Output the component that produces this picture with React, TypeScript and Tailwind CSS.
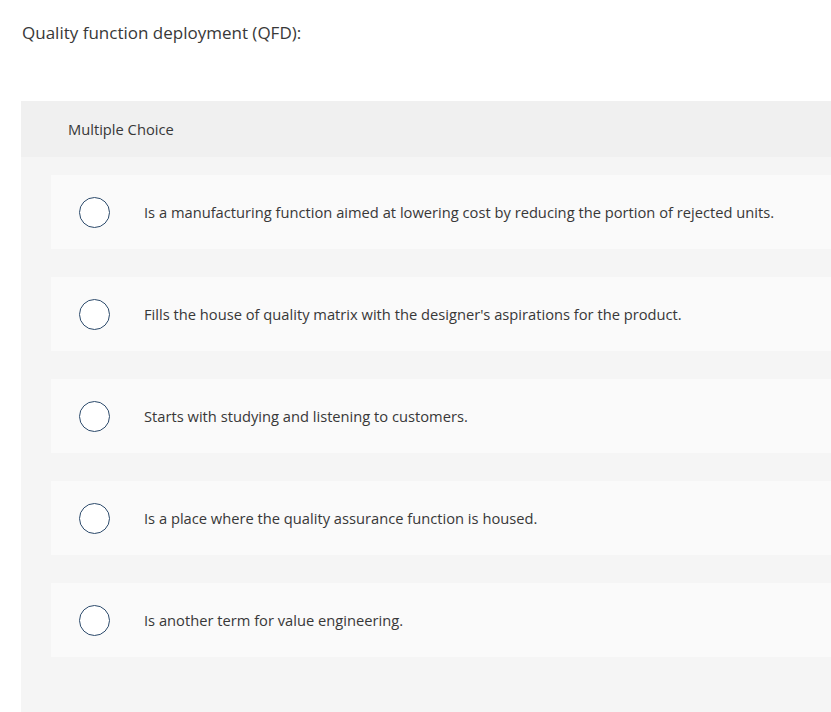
const options = [
  "Is a manufacturing function aimed at lowering cost by reducing the portion of rejected units.",
  "Fills the house of quality matrix with the designer's aspirations for the product.",
  "Starts with studying and listening to customers.",
  "Is a place where the quality assurance function is housed.",
  "Is another term for value engineering.",
];

export default function App() {
  return (
    <div className="min-h-[712px] bg-white font-['Open_Sans',sans-serif] text-[#383838]">
      <div className="px-[22px] pt-[21px] text-[17px] leading-[24px]">Quality function deployment (QFD):</div>
      <div className="mt-[56px] ml-[21px] bg-[#f5f5f5] pb-[60px]">
        <div className="flex h-[56px] items-center bg-[#f0f0f0] pl-[47px] text-[14.7px]">Multiple Choice</div>
        <div className="flex flex-col gap-[28px] pt-[18px] pl-[30px]">
          {options.map((o) => (
            <div key={o} className="flex h-[74px] items-center bg-[#fafafa]">
              <div className="ml-[28px] h-[31px] w-[31px] shrink-0 rounded-full border-[1.5px] border-[#2c4a6b] bg-white" />
              <div className="ml-[34px] text-[14.7px]">{o}</div>
            </div>
          ))}
        </div>
      </div>
    </div>
  );
}
